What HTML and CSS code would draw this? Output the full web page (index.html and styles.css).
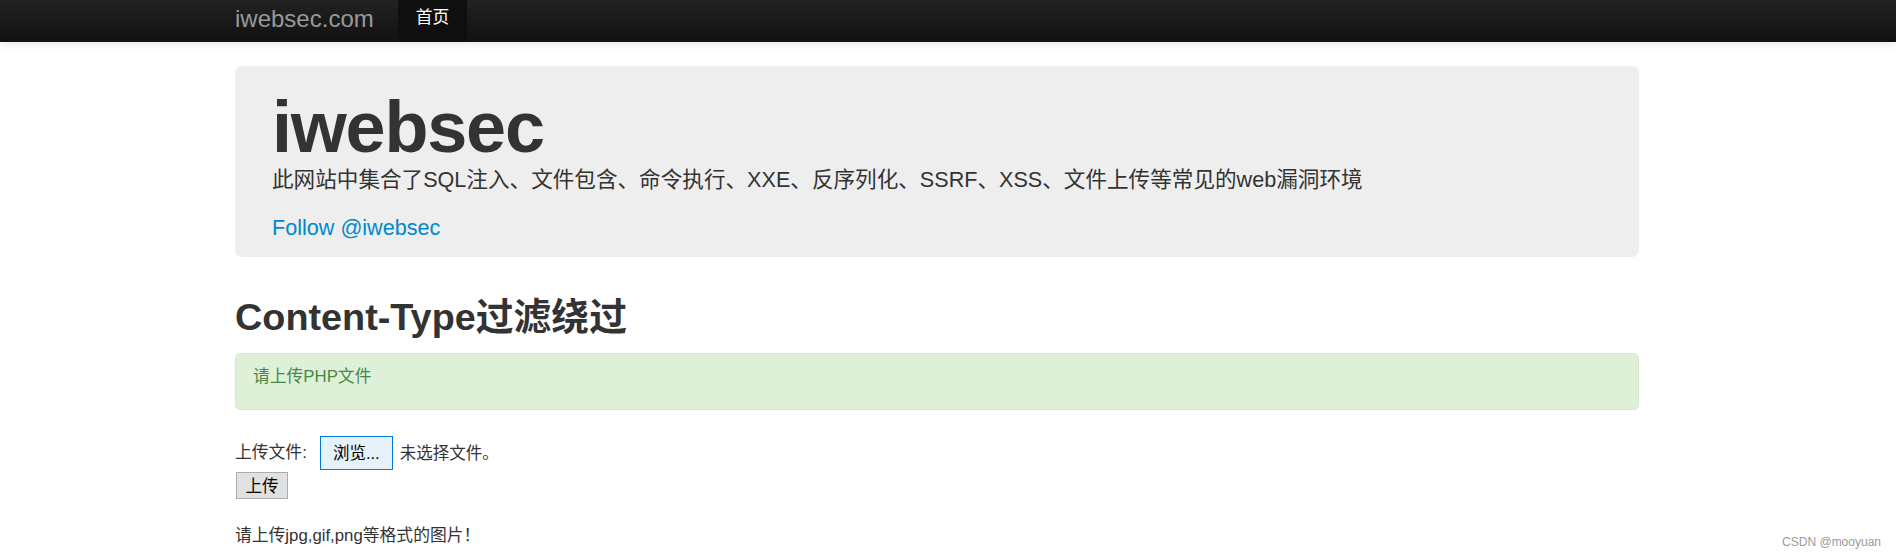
FILE: index.html
```html
<!DOCTYPE html>
<html lang="zh-CN">
<head>
<meta charset="utf-8">
<title>iwebsec</title>
<link rel="stylesheet" href="styles.css">
</head>
<body>
<header class="navbar">
  <div class="container nav-inner">
    <a class="brand" href="#">iwebsec.com</a>
    <ul class="nav">
      <li class="active"><a href="#">首页</a></li>
    </ul>
  </div>
</header>

<main class="container">
  <section class="hero">
    <h1>iwebsec</h1>
    <p class="lead">此网站中集合了SQL注入、文件包含、命令执行、XXE、反序列化、SSRF、XSS、文件上传等常见的web漏洞环境</p>
    <p class="lead"><a class="follow" href="#">Follow @iwebsec</a></p>
  </section>

  <h2 class="title">Content-Type过滤绕过</h2>
  <div class="alert"><p>请上传PHP文件</p></div>

  <form class="upload">
    <div class="file-row">
      <span class="file-label">上传文件:</span>
      <label class="file-picker">
        <input type="file" class="file-input">
        <span class="file-btn">浏览...</span>
        <span class="file-name">未选择文件。</span>
      </label>
    </div>
    <div class="submit-row"><button type="button" class="submit">上传</button></div>
  </form>
  <p class="hint">请上传jpg,gif,png等格式的图片！</p>
</main>

<div class="watermark">CSDN @mooyuan</div>
</body>
</html>
```

FILE: styles.css
```css
* { box-sizing: border-box; }
html, body { margin: 0; padding: 0; }
body {
  font-family: "Liberation Sans", Arial, "Noto Sans CJK SC", sans-serif;
  font-size: 16.8px;
  line-height: 24px;
  color: #333;
  background: #fff;
  width: 1896px;
  height: 559px;
  overflow: hidden;
  position: relative;
}
a { text-decoration: none; }

.container {
  width: 1404px;
  margin-left: 235px;
}

.navbar {
  height: 42px;
  background: linear-gradient(to bottom, #222222, #111111);
  box-shadow: 0 1px 10px rgba(0, 0, 0, 0.12);
  position: relative;
  z-index: 2;
}
.nav-inner {
  display: flex;
  height: 42px;
}
.brand {
  display: block;
  margin-left: -24px;
  padding: 0 24px 5px;
  font-size: 24px;
  line-height: 37px;
  color: #999;
}
.nav {
  display: flex;
  list-style: none;
  margin: 0;
  padding: 0;
}
.nav a {
  display: block;
  height: 42px;
  padding: 0 18px 6px;
  line-height: 36px;
  font-size: 16.8px;
  color: #fff;
}
.nav .active a {
  background: #0f0f0f;
}

.hero {
  margin-top: 24px;
  margin-bottom: 36px;
  padding: 26px 37px 11px;
  background: #eee;
  border-radius: 7px;
}
.hero h1 {
  margin: 0;
  font-size: 72px;
  line-height: 70px;
  letter-spacing: -1.2px;
  font-weight: bold;
  color: #333;
}
.lead {
  margin: 0 0 12px;
  font-size: 21.6px;
  line-height: 36px;
  color: #333;
}
.lead:last-child { margin-bottom: 0; }
.follow { color: #0088cc; }

.title {
  margin: 36px 0 12px;
  font-size: 37.8px;
  line-height: 48px;
  font-weight: bold;
  color: #333;
}

.alert {
  padding: 11px 42px 9px 17px;
  background: #dff0d8;
  border: 1px solid #d6e9c6;
  border-radius: 5px;
  color: #468847;
  margin-bottom: 25px;
}
.alert p { margin: 0 0 11px; }

.upload { margin: 0; }
.file-row {
  display: flex;
  align-items: center;
  height: 36px;
}
.file-label { margin-right: 13px; }
.file-picker {
  display: flex;
  align-items: center;
}
.file-input { display: none; }
.file-btn {
  display: flex;
  align-items: center;
  justify-content: center;
  width: 73px;
  height: 34px;
  border: 1px solid #0078d7;
  background: #e5f1fb;
  color: #000;
  font-size: 16.5px;
}
.file-name {
  margin-left: 7px;
  font-size: 16.5px;
  color: #333;
}
.submit-row { margin-top: 1px; }
.submit {
  width: 52px;
  height: 27px;
  padding: 0;
  margin-left: 1px;
  border: 1px solid #adadad;
  background: #e1e1e1;
  color: #000;
  font-family: "Liberation Sans", Arial, "Noto Sans CJK SC", sans-serif;
  font-size: 16.5px;
  line-height: 24px;
}
.hint {
  margin: 25px 0 0;
}

.watermark {
  position: absolute;
  right: 15px;
  bottom: 10px;
  font-size: 12px;
  line-height: 14px;
  color: #9a9a9a;
}
```
